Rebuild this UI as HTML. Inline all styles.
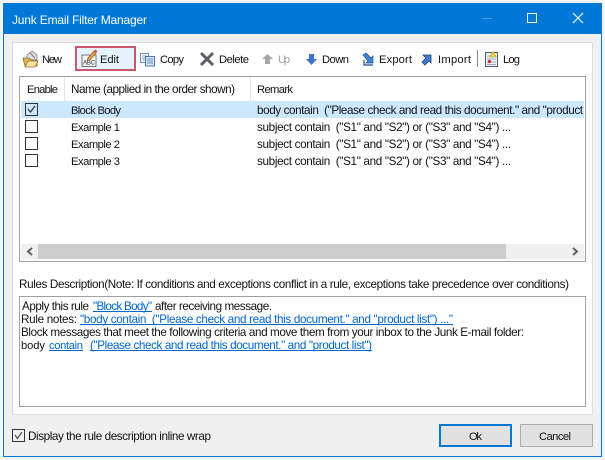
<!DOCTYPE html>
<html><head><meta charset="utf-8"><style>
html,body{margin:0;padding:0;background:#f4f4f4;width:605px;height:460px;overflow:hidden}
svg{display:block}
text{font-family:"Liberation Sans",sans-serif;font-size:11.7px;fill:#111;white-space:pre}
text.s{font-size:11.2px}
.l{fill:#0066cc}
</style></head><body>
<svg width="605" height="460" viewBox="0 0 605 460" xmlns="http://www.w3.org/2000/svg">
<rect x="3" y="3" width="599" height="454" fill="#0078d7"/>
<rect x="4" y="34" width="597" height="422" fill="#f0f0f0"/>
<text x="12" y="24" textLength="135" style="fill:#fff;font-size:12px">Junk Email Filter Manager</text>
<rect x="482" y="18" width="10" height="1" fill="#4a9fe3"/>
<rect x="527.5" y="13.5" width="9" height="9" fill="none" stroke="#fff"/>
<path d="M573 13L583 23M583 13L573 23" stroke="#fff" stroke-width="1.1" fill="none"/>

<rect x="12.500" y="42.500" width="580" height="372" fill="#fff" stroke="#dcdcdc"/>

<!-- toolbar -->
<rect x="76" y="47" width="59" height="23" fill="#e5f3ff" stroke="#c9586e" stroke-width="2"/>
<!-- New icon -->
<path d="M27 55L32 51L37 55V60H27Z" fill="#d8dce8" stroke="#7a8298" stroke-width=".8"/>
<path d="M30 53L35 58" stroke="#c85a60"/>
<path d="M23 58H29L31 60H37V66H25Z" fill="#e6b84f" stroke="#7f6a30" stroke-width=".8"/>
<path d="M25 67L28 61H38L35 67Z" fill="#fbe39a" stroke="#8a7236" stroke-width=".8"/>
<text class="s" x="42" y="63" textLength="20">New</text>
<!-- Edit icon -->
<rect x="82" y="55" width="14" height="11.500" fill="#f3f3f3" stroke="#777"/>
<text x="83" y="64.500" textLength="12" style="font-size:6px;fill:#333">ABC</text>
<path d="M88 58L94 51L96 53L90 60L87 61Z" fill="#e2a24c" stroke="#8b5a20" stroke-width=".7"/>
<path d="M94 51L95.500 49.500L97.500 51.500L96 53Z" fill="#cf5252"/>
<text class="s" x="100" y="63" textLength="19">Edit</text>
<!-- Copy icon -->
<rect x="140.500" y="53.500" width="8" height="9" fill="#fff" stroke="#6b8fc4"/>
<path d="M142 56H147M142 58H147M142 60H147" stroke="#6b8fc4" stroke-width=".8"/>
<rect x="145.500" y="56.500" width="9" height="9.500" fill="#dce8f8" stroke="#4a76b5"/>
<path d="M147 59H153M147 61H153M147 63H153" stroke="#4a76b5" stroke-width=".8"/>
<text class="s" x="160" y="63" textLength="24">Copy</text>
<!-- Delete icon -->
<path d="M201 53L213 65M213 53L201 65" stroke="#5a5f66" stroke-width="3" fill="none"/>
<text class="s" x="219" y="63" textLength="30">Delete</text>
<!-- Up -->
<path d="M262 59L267.500 54L273 59H270V64H265V59Z" fill="#a8a8a8"/>
<text class="s" x="278" y="63" textLength="12" style="fill:#a0a0a0">Up</text>
<!-- Down -->
<path d="M306 59H309V54H314V59H317L311.500 65Z" fill="#3d74cf"/>
<text class="s" x="322" y="63" textLength="27">Down</text>
<!-- Export -->
<path d="M363 55L366 53L371 58L373 56V63H366L368 61Z" fill="#3f86d8" stroke="#1f4e8c" stroke-width=".7"/>
<path d="M364 60V65H373" fill="none" stroke="#1f4e8c" stroke-width="1.200"/>
<text class="s" x="379" y="63" textLength="33">Export</text>
<!-- Import -->
<path d="M423 55H431V63L429 61L425 65L422 62L426 58Z" fill="#3f7fd0" stroke="#1c3f78" stroke-width=".8"/>
<text class="s" x="438" y="63" textLength="33">Import</text>
<rect x="477" y="50" width="1" height="17" fill="#8a8a8a"/>
<!-- Log -->
<rect x="485.500" y="52.500" width="12" height="14" fill="#eef2f7" stroke="#4c5a70"/>
<path d="M487 56H496M487 59H496M487 62H496M487 64.500H496" stroke="#7f96b8" stroke-width=".7"/>
<path d="M493 51.500L496.500 57H489.500Z" fill="#f4cf3a" stroke="#b8952a" stroke-width=".5"/>
<circle cx="489.500" cy="61.500" r="1.600" fill="#cf2a3a"/>
<text class="s" x="503" y="63" textLength="17">Log</text>

<!-- list -->
<rect x="19.500" y="76.500" width="566" height="185" fill="#fff" stroke="#a0a0a0"/>
<rect x="64" y="77" width="1" height="24" fill="#e5e5e5"/>
<rect x="250" y="77" width="1" height="24" fill="#e5e5e5"/>
<text class="s" x="27" y="93" textLength="31">Enable</text>
<text x="71" y="93" textLength="164">Name (applied in the order shown)</text>
<text class="s" x="257" y="93" textLength="36">Remark</text>
<rect x="21" y="101" width="563" height="17" fill="#cce8ff"/>
<g fill="#fff" stroke="#333">
<rect x="25.500" y="103.500" width="12" height="12" fill="none"/>
<rect x="25.500" y="120.500" width="12" height="12"/>
<rect x="25.500" y="137.500" width="12" height="12"/>
<rect x="25.500" y="154.500" width="12" height="12"/>
</g>
<path d="M28 109L30.500 112L35 106" fill="none" stroke="#333" stroke-width="1.200"/>
<text class="s" x="71" y="114" textLength="50">Block Body</text>
<text class="s" x="71" y="131" textLength="49">Example 1</text>
<text class="s" x="71" y="148" textLength="49">Example 2</text>
<text class="s" x="71" y="165" textLength="49">Example 3</text>
<text x="257" y="114" textLength="326">body contain  ("Please check and read this document." and "product</text>
<text x="257" y="131" textLength="254">subject contain  ("S1" and "S2") or ("S3" and "S4") ...</text>
<text x="257" y="148" textLength="254">subject contain  ("S1" and "S2") or ("S3" and "S4") ...</text>
<text x="257" y="165" textLength="254">subject contain  ("S1" and "S2") or ("S3" and "S4") ...</text>
<!-- scrollbar -->
<rect x="21" y="244" width="563" height="15" fill="#f0f0f0"/>
<rect x="38" y="244" width="468" height="15" fill="#cdcdcd"/>
<path d="M32 248L28 251.500L32 255" fill="none" stroke="#606060" stroke-width="2"/>
<path d="M573 248L577 251.500L573 255" fill="none" stroke="#606060" stroke-width="2"/>

<text x="19" y="288" textLength="550">Rules Description(Note: If conditions and exceptions conflict in a rule, exceptions take precedence over conditions)</text>

<rect x="19.500" y="296.500" width="566" height="110" fill="#fff" stroke="#a0a0a0"/>
<text x="22" y="310" textLength="67">Apply this rule</text>
<text x="93" y="310" textLength="59" class="l">"Block Body"</text>
<rect x="93" y="311" width="59" height="1" fill="#0066cc"/>
<text x="155" y="310" textLength="117">after receiving message.</text>
<text x="21" y="323" textLength="56">Rule notes:</text>
<text x="80" y="323" textLength="373" class="l">"body contain  ("Please check and read this document." and "product list") ..."</text>
<rect x="80" y="324" width="373" height="1" fill="#0066cc"/>
<text x="21" y="336" textLength="503">Block messages that meet the following criteria and move them from your inbox to the Junk E-mail folder:</text>
<text class="s" x="21" y="349" textLength="24">body</text>
<text class="s l" x="49" y="349" textLength="34">contain</text>
<rect x="49" y="350" width="34" height="1" fill="#0066cc"/>
<text x="90" y="349" textLength="282" class="l">("Please check and read this document." and "product list")</text>
<rect x="90" y="350" width="282" height="1" fill="#0066cc"/>

<!-- bottom -->
<rect x="12.500" y="429.500" width="12" height="12" fill="#f0f0f0" stroke="#333"/>
<path d="M15 435L17.500 438.500L22 432" fill="none" stroke="#555" stroke-width="1.300"/>
<text x="28" y="440" textLength="183">Display the rule description inline wrap</text>
<rect x="440" y="425" width="71" height="21" fill="#e1e1e1" stroke="#0078d7" stroke-width="2"/>
<text class="s" x="469" y="440" textLength="13">Ok</text>
<rect x="520.500" y="424.500" width="72" height="22" fill="#e1e1e1" stroke="#adadad"/>
<text class="s" x="539" y="440" textLength="32">Cancel</text>
</svg>
</body></html>
